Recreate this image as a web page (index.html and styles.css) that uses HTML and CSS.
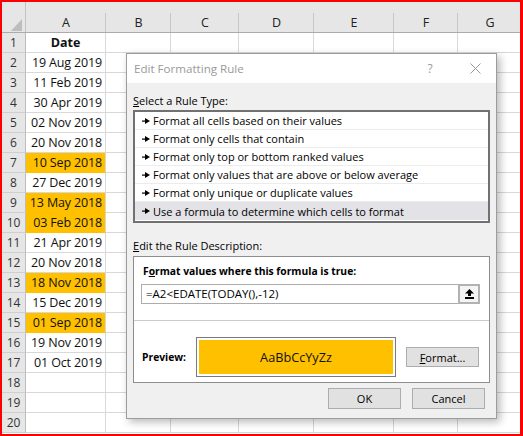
FILE: index.html
```html
<!DOCTYPE html>
<html>
<head>
<meta charset="utf-8">
<link rel="stylesheet" href="styles.css">
</head>
<body>
<div class="frame">
  <div class="sheet">
    <div class="row head">
      <div class="corner"><svg width="11" height="12" viewBox="0 0 11 12"><polygon points="11,0 11,12 0,12" fill="#bdbdbd"/></svg></div>
      <div class="hc">A</div><div class="hc">B</div><div class="hc">C</div><div class="hc">D</div><div class="hc">E</div><div class="hc">F</div><div class="hc">G</div>
    </div>
    <div class="row"><div class="rh">1</div><div class="c title-cell">Date</div><div class="c"></div><div class="c"></div><div class="c"></div><div class="c"></div><div class="c"></div><div class="c"></div></div>
    <div class="row"><div class="rh">2</div><div class="c">19 Aug 2019</div><div class="c"></div><div class="c"></div><div class="c"></div><div class="c"></div><div class="c"></div><div class="c"></div></div>
    <div class="row"><div class="rh">3</div><div class="c">11 Feb 2019</div><div class="c"></div><div class="c"></div><div class="c"></div><div class="c"></div><div class="c"></div><div class="c"></div></div>
    <div class="row"><div class="rh">4</div><div class="c">30 Apr 2019</div><div class="c"></div><div class="c"></div><div class="c"></div><div class="c"></div><div class="c"></div><div class="c"></div></div>
    <div class="row"><div class="rh">5</div><div class="c">02 Nov 2019</div><div class="c"></div><div class="c"></div><div class="c"></div><div class="c"></div><div class="c"></div><div class="c"></div></div>
    <div class="row"><div class="rh">6</div><div class="c">20 Nov 2018</div><div class="c"></div><div class="c"></div><div class="c"></div><div class="c"></div><div class="c"></div><div class="c"></div></div>
    <div class="row"><div class="rh">7</div><div class="c hl">10 Sep 2018</div><div class="c"></div><div class="c"></div><div class="c"></div><div class="c"></div><div class="c"></div><div class="c"></div></div>
    <div class="row"><div class="rh">8</div><div class="c">27 Dec 2019</div><div class="c"></div><div class="c"></div><div class="c"></div><div class="c"></div><div class="c"></div><div class="c"></div></div>
    <div class="row"><div class="rh">9</div><div class="c hl">13 May 2018</div><div class="c"></div><div class="c"></div><div class="c"></div><div class="c"></div><div class="c"></div><div class="c"></div></div>
    <div class="row"><div class="rh">10</div><div class="c hl">03 Feb 2018</div><div class="c"></div><div class="c"></div><div class="c"></div><div class="c"></div><div class="c"></div><div class="c"></div></div>
    <div class="row"><div class="rh">11</div><div class="c">21 Apr 2019</div><div class="c"></div><div class="c"></div><div class="c"></div><div class="c"></div><div class="c"></div><div class="c"></div></div>
    <div class="row"><div class="rh">12</div><div class="c">20 Nov 2018</div><div class="c"></div><div class="c"></div><div class="c"></div><div class="c"></div><div class="c"></div><div class="c"></div></div>
    <div class="row"><div class="rh">13</div><div class="c hl">18 Nov 2018</div><div class="c"></div><div class="c"></div><div class="c"></div><div class="c"></div><div class="c"></div><div class="c"></div></div>
    <div class="row"><div class="rh">14</div><div class="c">15 Dec 2019</div><div class="c"></div><div class="c"></div><div class="c"></div><div class="c"></div><div class="c"></div><div class="c"></div></div>
    <div class="row"><div class="rh">15</div><div class="c hl">01 Sep 2018</div><div class="c"></div><div class="c"></div><div class="c"></div><div class="c"></div><div class="c"></div><div class="c"></div></div>
    <div class="row"><div class="rh">16</div><div class="c">19 Nov 2019</div><div class="c"></div><div class="c"></div><div class="c"></div><div class="c"></div><div class="c"></div><div class="c"></div></div>
    <div class="row"><div class="rh">17</div><div class="c">01 Oct 2019</div><div class="c"></div><div class="c"></div><div class="c"></div><div class="c"></div><div class="c"></div><div class="c"></div></div>
    <div class="row"><div class="rh">18</div><div class="c"></div><div class="c"></div><div class="c"></div><div class="c"></div><div class="c"></div><div class="c"></div><div class="c"></div></div>
    <div class="row"><div class="rh">19</div><div class="c"></div><div class="c"></div><div class="c"></div><div class="c"></div><div class="c"></div><div class="c"></div><div class="c"></div></div>
    <div class="row"><div class="rh">20</div><div class="c"></div><div class="c"></div><div class="c"></div><div class="c"></div><div class="c"></div><div class="c"></div><div class="c"></div></div>
  </div>

  <div class="dialog">
    <div class="titlebar">
      <span class="dtitle">Edit Formatting Rule</span>
      <span class="help">?</span>
      <span class="close"><svg width="11" height="11" viewBox="0 0 11 11"><path d="M0.5 0.5L10.5 10.5M10.5 0.5L0.5 10.5" stroke="#9a9a9a" stroke-width="1" fill="none"/></svg></span>
    </div>
    <div class="dbody">
      <div class="lbl"><u>S</u>elect a Rule Type:</div>
      <ul class="rules">
        <li><svg class="arr" width="8" height="6" viewBox="0 0 8 6"><rect x="0" y="2.5" width="4" height="1.2" fill="#000"/><polygon points="3,0 8,3 3,6" fill="#000"/></svg>Format all cells based on their values</li>
        <li><svg class="arr" width="8" height="6" viewBox="0 0 8 6"><rect x="0" y="2.5" width="4" height="1.2" fill="#000"/><polygon points="3,0 8,3 3,6" fill="#000"/></svg>Format only cells that contain</li>
        <li><svg class="arr" width="8" height="6" viewBox="0 0 8 6"><rect x="0" y="2.5" width="4" height="1.2" fill="#000"/><polygon points="3,0 8,3 3,6" fill="#000"/></svg>Format only top or bottom ranked values</li>
        <li><svg class="arr" width="8" height="6" viewBox="0 0 8 6"><rect x="0" y="2.5" width="4" height="1.2" fill="#000"/><polygon points="3,0 8,3 3,6" fill="#000"/></svg>Format only values that are above or below average</li>
        <li><svg class="arr" width="8" height="6" viewBox="0 0 8 6"><rect x="0" y="2.5" width="4" height="1.2" fill="#000"/><polygon points="3,0 8,3 3,6" fill="#000"/></svg>Format only unique or duplicate values</li>
        <li class="sel"><svg class="arr" width="8" height="6" viewBox="0 0 8 6"><rect x="0" y="2.5" width="4" height="1.2" fill="#000"/><polygon points="3,0 8,3 3,6" fill="#000"/></svg>Use a formula to determine which cells to format</li>
      </ul>
      <div class="lbl lbl2"><u>E</u>dit the Rule Description:</div>
      <div class="desc">
        <div class="desc-top">
          <div class="blabel">F<u>o</u>rmat values where this formula is true:</div>
          <div class="formula">
            <div class="ftext">=A2&lt;EDATE(TODAY(),-12)</div>
            <div class="ref"><svg width="9" height="10" viewBox="0 0 9 10"><polygon points="4.5,0 9,4.5 6,4.5 6,7 3,7 3,4.5 0,4.5" fill="#000"/><rect x="0" y="8" width="9" height="2" fill="#000"/></svg></div>
          </div>
        </div>
        <div class="desc-bottom">
          <span class="blabel plabel">Preview:</span>
          <div class="preview"><div class="swatch">AaBbCcYyZz</div></div>
          <div class="btn fmt"><u>F</u>ormat...</div>
        </div>
      </div>
      <div class="actions">
        <div class="btn">OK</div>
        <div class="btn">Cancel</div>
      </div>
    </div>
  </div>
</div>
</body>
</html>
```
FILE: styles.css
```css
* { box-sizing: border-box; }
html, body { margin: 0; padding: 0; }
body { width: 523px; height: 436px; overflow: hidden; background: #fff; }

.frame {
  position: relative;
  width: 523px;
  height: 436px;
  border: 2px solid #ff0000;
  border-right-width: 3px;
  overflow: hidden;
  background: #fff;
}

/* ---------- spreadsheet ---------- */
.sheet { font-family: "Open Sans", "Noto Sans", sans-serif; color: #1a1a1a; }
.row {
  display: grid;
  grid-template-columns: 24px 80px 65px 68px 75px 80px 64px 64px;
  height: 20px;
}
.row.head {
  height: 31px;
  background: #e6e6e6;
  border-bottom: 1px solid #ababab;
}
.corner {
  display: flex;
  justify-content: flex-end;
  align-items: flex-end;
  padding: 0 3px 1px 0;
  border-right: 1px solid #c3c3c3;
}
.hc {
  position: relative;
  padding-top: 11px;
  line-height: 19px;
  text-align: center;
  font-size: 12.5px;
  color: #222;
}
.hc::after {
  content: "";
  position: absolute;
  right: 0;
  top: 11px;
  bottom: 0;
  width: 1px;
  background: #c6c6c6;
}
.rh {
  background: #e6e6e6;
  border-right: 1px solid #bdbdbd;
  border-bottom: 1px solid #cfcfcf;
  text-align: center;
  font-size: 12px;
  line-height: 19px;
  color: #333;
}
.c {
  border-right: 1px solid #d8d8d8;
  border-bottom: 1px solid #d8d8d8;
  text-align: right;
  padding-right: 3px;
  font-size: 12.5px;
  letter-spacing: -0.15px;
  line-height: 19px;
  white-space: nowrap;
  color: #111;
}
.c.title-cell { text-align: center; font-weight: bold; letter-spacing: 0; padding-right: 0; }
.c.hl { background: #ffc000; border-bottom-color: #ffc000; }

/* ---------- dialog ---------- */
.dialog {
  position: absolute;
  left: 124px;
  top: 51px;
  width: 371px;
  height: 366px;
  border: 1px solid #9c9c9c;
  background: #f0f0f0;
  box-shadow: 3px 3px 8px rgba(0, 0, 0, 0.28);
  display: flex;
  flex-direction: column;
  font-family: "Open Sans", "Noto Sans", sans-serif;
  font-size: 11px;
  color: #000;
}
.titlebar {
  height: 29px;
  flex: none;
  background: #fff;
  display: flex;
  align-items: center;
  padding-left: 7px;
  padding-right: 10px;
}
.dtitle { flex: 1; color: #9a9a9a; font-size: 11.6px; }
.help { width: 20px; text-align: center; color: #9a9a9a; font-size: 12px; margin-right: 24px; }
.close { width: 22px; display: flex; justify-content: center; align-items: center; }

.dbody { flex: 1; padding: 11px 6px 7px 6px; display: flex; flex-direction: column; }
.lbl { line-height: 14px; height: 14px; margin-bottom: 2px; }
.lbl2 { margin-top: 16px; margin-bottom: 3px; }
u { text-decoration: underline; text-underline-offset: 1px; }

.rules {
  list-style: none;
  margin: 0;
  padding: 0;
  height: 113px;
  background: #fff;
  border: 2px solid #717171;
}
.rules li {
  height: 18px;
  display: flex;
  align-items: center;
  padding-left: 7px;
  border-bottom: 1px solid #ececec;
  white-space: nowrap;
}
.rules li.sel { background: #e2e2e7; border-bottom: none; }
.arr { margin-right: 3px; flex: none; }

.desc { border: 1px solid #8e8e8e; background: #fff; }
.desc-top { padding: 7px 9px 16px 7px; border-bottom: 1px solid #cacaca; }
.blabel { font-weight: bold; line-height: 14px; height: 14px; font-size: 10.3px; }
.desc-top .blabel { margin-left: 2px; }
.formula { display: flex; height: 20px; margin-top: 6px; }
.ftext {
  flex: 1;
  border: 1px solid #acacac;
  border-right: none;
  padding-left: 4px;
  line-height: 18px;
  font-size: 11.5px;
}
.ref {
  width: 22px;
  border: 2px solid #b2b2b2;
  background: #f4f4f4;
  display: flex;
  align-items: center;
  justify-content: center;
}
.desc-bottom { display: flex; align-items: center; padding: 16px 0 5px 8px; }
.plabel { width: 54px; flex: none; }
.preview { width: 200px; height: 40px; border: 1px solid #7b7b7b; padding: 2px; flex: none; }
.swatch {
  height: 100%;
  background: #ffc000;
  display: flex;
  align-items: center;
  justify-content: center;
  font-size: 12.7px;
  color: #111;
}
.btn {
  width: 73px;
  height: 21px;
  background: #e1e1e1;
  border: 1px solid #adadad;
  display: flex;
  align-items: center;
  justify-content: center;
  flex: none;
}
.btn.fmt { margin-left: 10px; height: 20px; }
.actions { display: flex; justify-content: flex-end; gap: 11px; margin-top: 5px; padding-right: 5px; }
```
